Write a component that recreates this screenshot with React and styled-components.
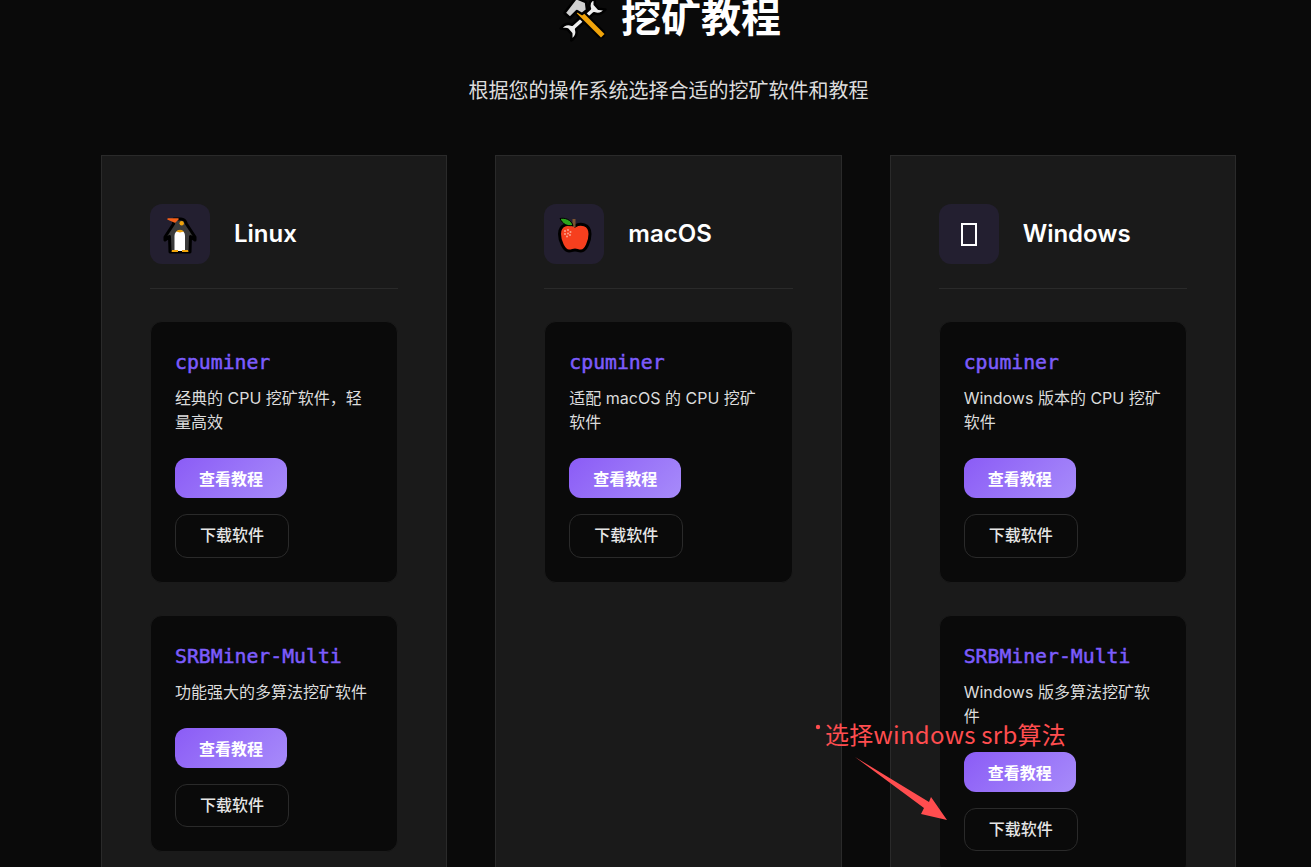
import React from "react";
import styled, { createGlobalStyle } from "styled-components";

const Global = createGlobalStyle`
  html, body { margin: 0; padding: 0; background: #0a0a0a; height: 867px; overflow: hidden; }
  * { box-sizing: border-box; }
  body { font-family: Inter, "Noto Sans CJK SC", sans-serif; color: #fff; }
`;
const Page = styled.div`
  position: relative;
  width: 1311px;
  height: 867px;
  overflow: hidden;
  background: #0a0a0a;
  padding-left: 101px;
`;
const Container = styled.main`
  width: 1135px;
  margin-top: -6px;
`;
const Title = styled.h1`
  display: flex;
  justify-content: center;
  align-items: center;
  gap: 11px;
  margin: 0;
  height: 48px;
  font-size: 40px;
  line-height: 48px;
  font-weight: 700;
  color: #fff;
`;
const Subtitle = styled.p`
  margin: 34px 0 49px;
  text-align: center;
  font-size: 20px;
  line-height: 30px;
  color: #dcdcdc;
`;
const Grid = styled.div`
  display: grid;
  grid-template-columns: repeat(3, 1fr);
  gap: 48px;
`;
const Column = styled.section`
  background: #1a1a1a;
  border: 1px solid #2a2a2a;
  padding: 48px;
  min-height: 900px;
`;
const Header = styled.header`
  display: flex;
  align-items: center;
  gap: 24px;
  padding-bottom: 24px;
  border-bottom: 1px solid #2a2a2a;
  margin-bottom: 32px;
`;
const IconBox = styled.div`
  width: 60px;
  height: 60px;
  border-radius: 12px;
  background: #231f30;
  display: flex;
  align-items: center;
  justify-content: center;
`;
const Tofu = styled.span`
  display: block;
  width: 16px;
  height: 23px;
  border: 2px solid #fff;
`;
const OsName = styled.h2`
  margin: 0;
  font-size: 24px;
  line-height: 32px;
  font-weight: 600;
  color: #fff;
`;
const Miner = styled.article`
  background: #0a0a0a;
  border: 1px solid #1a1a1a;
  border-radius: 12px;
  padding: 24px;
  margin-bottom: 32px;
`;
const MinerName = styled.h3`
  margin: 0 0 6px;
  font-family: "DejaVu Sans Mono", monospace;
  font-size: 19.8px;
  line-height: 34px;
  font-weight: 400;
  color: #7c5cfc;
  -webkit-text-stroke: 0.5px #7c5cfc;
`;
const MinerDesc = styled.p`
  margin: 0 0 24px;
  font-size: 16px;
  line-height: 24px;
  color: #dcdcdc;
`;
const Actions = styled.div`
  display: flex;
  flex-wrap: wrap;
  gap: 16px;
`;
const Primary = styled.a`
  display: block;
  height: 40px;
  padding: 0 24px;
  border-radius: 12px;
  background: linear-gradient(135deg, #8b5cf6, #a78bfa);
  font-size: 16px;
  line-height: 42px;
  font-weight: 600;
  color: #fff;
`;
const Secondary = styled.a`
  display: block;
  height: 43.6px;
  padding: 0 24px;
  border: 1px solid #2a2a2a;
  border-radius: 12px;
  font-size: 16px;
  line-height: 41.6px;
  font-weight: 500;
  color: #e6e6e6;
`;
const Note = styled.div`
  position: absolute;
  left: 825px;
  top: 717px;
  font-family: "Noto Sans CJK SC", sans-serif;
  font-size: 24px;
  line-height: 34px;
  letter-spacing: 0.27px;
  color: #ff4d4f;
  white-space: nowrap;
`;
const NoteArrow = styled.svg`
  position: absolute;
  left: 810px;
  top: 720px;
`;

const ToolsIcon = () => (
  <svg width="54" height="48" viewBox="0 -6 54 48">
    <g transform="translate(27,19) rotate(-42)">
      <path
        d="M-12 -3L12 -3C14 -7.500 18 -9 23 -8L18.500 -3L18.500 3L23 8C18 9 14 7.500 12 3L-12 3C-14 7.500 -18 9 -23 8L-18.500 3L-18.500 -3L-23 -8C-18 -9 -14 -7.500 -12 -3Z"
        fill="#ececec"
        stroke="#000"
        strokeWidth="2.500"
        strokeLinejoin="round"
      />
    </g>
    <path d="M24 13L45 34" stroke="#000" strokeWidth="9" strokeLinecap="round" />
    <path d="M24 13L45 34" stroke="#f0a30a" strokeWidth="5" strokeLinecap="square" />
    <path d="M8.500 13L20 -2L30 2L31 10L26 14L21 11L14 18Z" fill="#cfcfcf" stroke="#000" strokeWidth="2.500" strokeLinejoin="round" />
  </svg>
);

const PenguinIcon = () => (
  <svg width="60" height="60" viewBox="0 0 60 60">
    <path
      d="M24 15H31Q35 15 36.500 20L45 33V36L40.500 32.500L40 48H20L19.500 32.500L15 36V33L23.500 20Z"
      fill="#3a3a3a"
      stroke="#000"
      strokeWidth="3"
      strokeLinejoin="round"
    />
    <path d="M18 15H28L25 18Z" fill="#f4601a" stroke="#f4601a" strokeWidth="1.500" strokeLinejoin="round" />
    <path d="M24.500 32Q24.500 27 30 26Q35 27 35 32V47H24.500Z" fill="#fff" />
    <path d="M26 27.500Q30 24 34 27.500L30 28.500Z" fill="#f0a30a" />
    <circle cx="31.700" cy="19.300" r="2.200" fill="#f0a30a" />
    <path d="M22 46H28V48H21.500ZM32 46H38L38.500 48H32Z" fill="#f0a30a" />
  </svg>
);

const AppleIcon = () => (
  <svg width="60" height="60" viewBox="0 0 60 60">
    <path
      d="M31 22C36 19 46 19.500 46 30C46 37 42 47 37 47C34 47 33 46 31 46C29 46 28 47 25 47C20 47 15.500 37 15.500 30C15.500 19.500 26 19 31 22Z"
      fill="#f63f1e"
      stroke="#000"
      strokeWidth="3"
    />
    <path d="M30 15V23" stroke="#7a5230" strokeWidth="3" />
    <path d="M16 14.500C21 13.500 27 15.500 29 21.500C23 22.500 18.500 20 16 14.500Z" fill="#2ea31c" stroke="#000" strokeWidth="1" />
    <g fill="#fba58c">
      <circle cx="21" cy="27" r="1" />
      <circle cx="24" cy="26" r="1" />
      <circle cx="26.500" cy="28" r="1" />
      <circle cx="21" cy="30" r="1" />
      <circle cx="24" cy="29.500" r="1" />
      <circle cx="26" cy="31" r="1" />
      <circle cx="23" cy="32.500" r="1" />
    </g>
  </svg>
);

const data = [
  {
    os: "Linux",
    icon: <PenguinIcon />,
    miners: [
      { name: "cpuminer", desc: "经典的 CPU 挖矿软件，轻量高效" },
      { name: "SRBMiner-Multi", desc: "功能强大的多算法挖矿软件" },
    ],
  },
  {
    os: "macOS",
    icon: <AppleIcon />,
    miners: [{ name: "cpuminer", desc: "适配 macOS 的 CPU 挖矿软件" }],
  },
  {
    os: "Windows",
    icon: <Tofu />,
    miners: [
      { name: "cpuminer", desc: "Windows 版本的 CPU 挖矿软件" },
      { name: "SRBMiner-Multi", desc: "Windows 版多算法挖矿软件" },
    ],
  },
];

export default function App() {
  return (
    <Page>
      <Global />
      <Container>
        <Title>
          <ToolsIcon />
          <span>挖矿教程</span>
        </Title>
        <Subtitle>根据您的操作系统选择合适的挖矿软件和教程</Subtitle>
        <Grid>
          {data.map((c) => (
            <Column key={c.os}>
              <Header>
                <IconBox>{c.icon}</IconBox>
                <OsName>{c.os}</OsName>
              </Header>
              {c.miners.map((m) => (
                <Miner key={m.name}>
                  <MinerName>{m.name}</MinerName>
                  <MinerDesc>{m.desc}</MinerDesc>
                  <Actions>
                    <Primary>查看教程</Primary>
                    <Secondary>下载软件</Secondary>
                  </Actions>
                </Miner>
              ))}
            </Column>
          ))}
        </Grid>
      </Container>
      <Note>选择windows srb算法</Note>
      <NoteArrow width="150" height="110" viewBox="810 720 150 110">
        <circle cx="818" cy="727" r="2.200" fill="#ff4d4f" />
        <path d="M855 757L929 802L931 797L947 820L921 814L924 808Z" fill="#ff4d4f" />
      </NoteArrow>
    </Page>
  );
}
